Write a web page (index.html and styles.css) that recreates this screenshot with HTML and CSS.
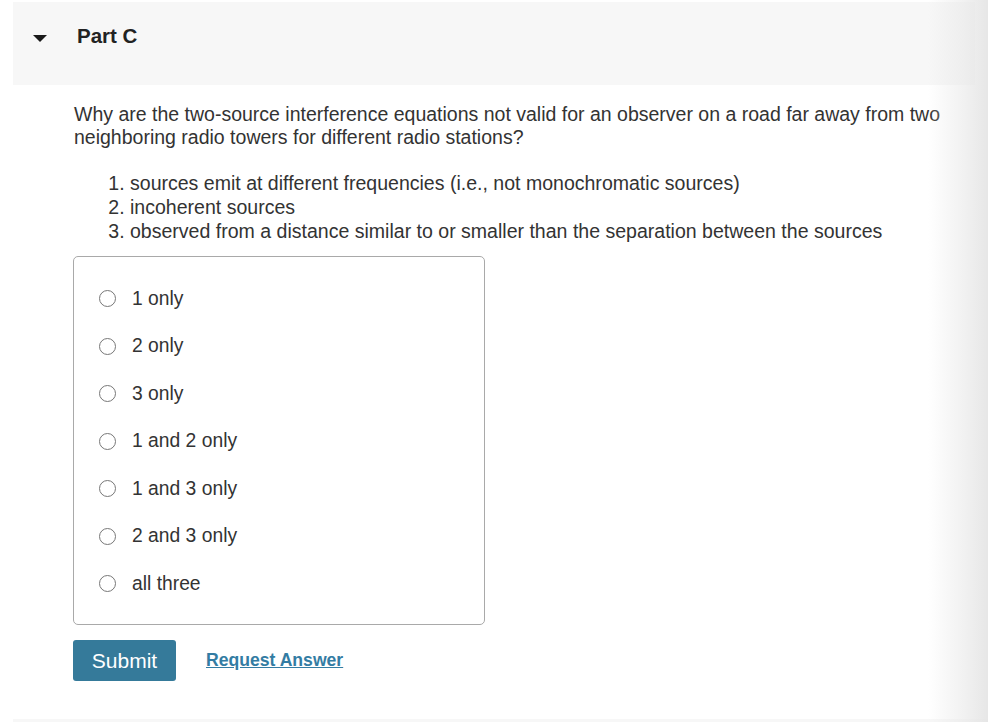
FILE: index.html
```html
<!DOCTYPE html>
<html lang="en">
<head>
<meta charset="utf-8">
<title>Part C</title>
<link rel="stylesheet" href="styles.css">
</head>
<body>
<div class="page">
  <div class="part-header">
    <span class="caret"></span>
    <h2 class="part-title">Part C</h2>
  </div>
  <div class="part-body">
    <p class="question">Why are the two-source interference equations not valid for an observer on a road far away from two neighboring radio towers for different radio stations?</p>
    <ol class="statements">
      <li>sources emit at different frequencies (i.e., not monochromatic sources)</li>
      <li>incoherent sources</li>
      <li>observed from a distance similar to or smaller than the separation between the sources</li>
    </ol>
    <div class="options">
      <label class="option"><span class="radio"></span><span class="opt-text">1 only</span></label>
      <label class="option"><span class="radio"></span><span class="opt-text">2 only</span></label>
      <label class="option"><span class="radio"></span><span class="opt-text">3 only</span></label>
      <label class="option"><span class="radio"></span><span class="opt-text">1 and 2 only</span></label>
      <label class="option"><span class="radio"></span><span class="opt-text">1 and 3 only</span></label>
      <label class="option"><span class="radio"></span><span class="opt-text">2 and 3 only</span></label>
      <label class="option"><span class="radio"></span><span class="opt-text">all three</span></label>
    </div>
    <div class="actions">
      <button class="submit" type="button">Submit</button>
      <a class="request" href="#">Request Answer</a>
    </div>
  </div>
  <div class="bottom-rule"></div>
  <div class="edge-shadow"></div>
</div>
</body>
</html>
```
FILE: styles.css
```css
html, body {
  margin: 0;
  padding: 0;
  background: #ffffff;
}
body {
  font-family: "Liberation Sans", Arial, Helvetica, sans-serif;
  color: #333333;
}
.page {
  position: relative;
  width: 988px;
  height: 722px;
  overflow: hidden;
  padding: 2px 0 0 13px;
  box-sizing: border-box;
}
.part-header {
  width: 962px;
  height: 83px;
  background: #f7f7f7;
  display: flex;
  align-items: flex-start;
  box-sizing: border-box;
  padding: 21px 0 0 20px;
}
.caret {
  width: 0;
  height: 0;
  border-left: 7px solid transparent;
  border-right: 7px solid transparent;
  border-top: 7px solid #1a1a1a;
  margin-top: 12px;
}
.part-title {
  margin: 0 0 0 30px;
  font-size: 20.5px;
  font-weight: bold;
  color: #222222;
  line-height: 26px;
}
.part-body {
  padding: 18px 0 0 61px;
  width: 880px;
}
.question {
  margin: 0;
  font-size: 19.5px;
  line-height: 23px;
}
.statements {
  margin: 22px 0 0 0;
  padding: 0 0 0 56px;
  font-size: 19.55px;
  line-height: 24px;
}
.options {
  margin: 13px 0 0 -1px;
  width: 412px;
  height: 369px;
  box-sizing: border-box;
  border: 1px solid #a9a9a9;
  border-radius: 5px;
  padding: 18px 0 0 25px;
  display: flex;
  flex-direction: column;
}
.option {
  display: flex;
  align-items: center;
  height: 47.5px;
  font-size: 19.3px;
}
.radio {
  width: 15px;
  height: 15px;
  border: 1.5px solid #777777;
  border-radius: 50%;
  box-sizing: content-box;
  flex: none;
}
.opt-text {
  margin-left: 16px;
}
.actions {
  margin: 15px 0 0 -1px;
  display: flex;
  align-items: center;
}
.submit {
  width: 103px;
  height: 41px;
  background: #357a9a;
  color: #ffffff;
  border: none;
  border-radius: 3px;
  font-family: "Liberation Sans", Arial, Helvetica, sans-serif;
  font-size: 21px;
  padding: 0;
}
.request {
  margin-left: 30px;
  font-size: 17.6px;
  font-weight: bold;
  color: #337ca3;
  text-decoration: underline;
}
.bottom-rule {
  position: absolute;
  left: 13px;
  right: 0;
  top: 719px;
  height: 3px;
  background: #f7f7f7;
}
.edge-shadow {
  position: absolute;
  top: 0;
  right: 0;
  width: 60px;
  height: 722px;
  background: linear-gradient(to right, rgba(230,230,230,0) 0%, rgba(232,232,232,0.6) 60%, rgba(228,228,228,0.9) 100%);
  pointer-events: none;
}
```
